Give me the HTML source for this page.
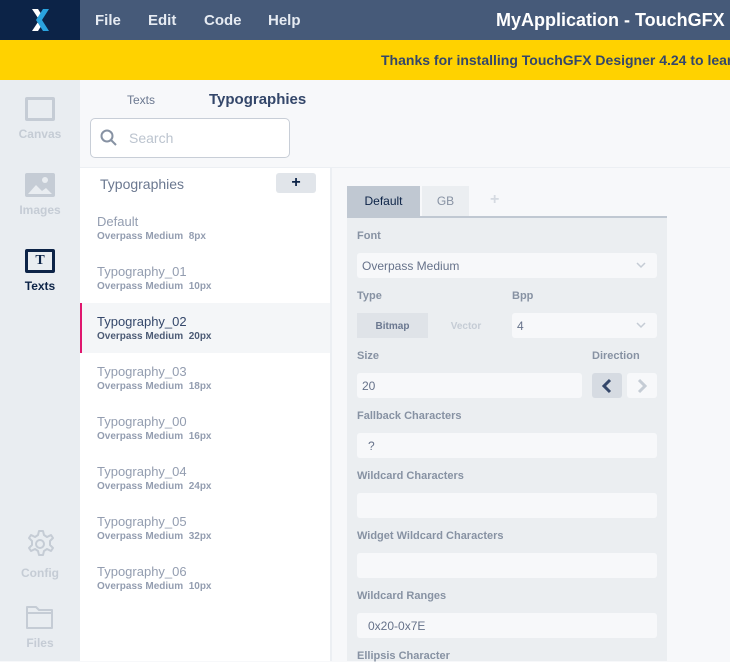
<!DOCTYPE html>
<html><head><meta charset="utf-8"><style>
*{margin:0;padding:0;box-sizing:border-box}
body{width:730px;height:661px;overflow:hidden;background:#f7f8fa;font-family:"Liberation Sans","DejaVu Sans",sans-serif;position:relative}
.a{position:absolute}
.top{left:0;top:0;width:730px;height:40px;background:#465a79}
.logo{left:0;top:0;width:80px;height:40px;background:#0c2347}
.menu{top:12px;color:#e6ebf2;font-size:15px;font-weight:bold}
.yellow{left:0;top:40px;width:730px;height:40px;background:#ffd200}
.side{left:0;top:80px;width:80px;height:581px;background:#e9edf1}
.slab{width:80px;text-align:center;font-size:12px;font-weight:bold;color:#c5ccd5}
.list{left:80px;top:168px;width:250px;height:493px;background:#fff}
.item{left:80px;width:250px;height:50px}
.item .n{position:absolute;left:17px;top:11px;font-size:13px;color:#939db0}
.item .s{position:absolute;left:17px;top:28px;font-size:10px;font-weight:bold;color:#939db0}
.lbl{left:357px;font-size:11px;font-weight:bold;color:#8792a3}
.inp{left:357px;width:300px;height:25px;background:#f7f8fa;border-radius:3px;font-size:12px;color:#66728a;padding:6px 0 0 5px}
</style></head><body>
<div class="a top"></div>
<div class="a logo">
<svg width="80" height="40"><path d="M32 9h6l5 8-3 4z" fill="#fff"/><path d="M32 31h6l5-8-3-4z" fill="#fff"/><path d="M43 9h6l-7 11 7 11h-6l-7-11z" fill="#2aa3df"/></svg>
</div>
<div class="a menu" style="left:95px">File</div>
<div class="a menu" style="left:148px">Edit</div>
<div class="a menu" style="left:204px">Code</div>
<div class="a menu" style="left:268px">Help</div>
<div class="a" style="left:496px;top:10px;color:#fff;font-size:18px;font-weight:bold;white-space:nowrap">MyApplication - TouchGFX D</div>
<div class="a yellow"></div>
<div class="a" style="left:381px;top:52px;color:#34476a;font-size:14px;font-weight:bold;white-space:nowrap">Thanks for installing TouchGFX Designer 4.24 to lear</div>
<div class="a side"></div>
<div class="a" style="left:25px;top:97px;width:30px;height:24px;border:3px solid #c5ccd5;border-radius:2px"></div>
<div class="a slab" style="top:127px">Canvas</div>
<svg class="a" style="left:25px;top:173px" width="30" height="24"><rect x="0" y="0" width="30" height="24" rx="2" fill="#c5ccd5"/><path d="M3 21l8-9 6 6 4-3 6 6z" fill="#e9edf1"/><circle cx="20" cy="7" r="3" fill="#e9edf1"/></svg>
<div class="a slab" style="top:203px">Images</div>
<div class="a" style="left:25px;top:249px;width:30px;height:24px;border:3px solid #0c2347;border-radius:2px;text-align:center;font:bold 14px 'Liberation Serif',serif;color:#0c2347;line-height:18px">T</div>
<div class="a slab" style="top:279px;color:#0c2347">Texts</div>
<svg class="a" style="left:24px;top:528px" width="32" height="32"><path d="M16 3l3 0 1 4 3 2 4-2 2 3-3 3 0 4 3 3-2 3-4-2-3 2-1 4h-4l-1-4-3-2-4 2-2-3 3-3v-4l-3-3 2-3 4 2 3-2 1-4z" fill="none" stroke="#c5ccd5" stroke-width="2" stroke-linejoin="round"/><circle cx="16" cy="16" r="4" fill="none" stroke="#c5ccd5" stroke-width="2"/></svg>
<div class="a slab" style="top:566px">Config</div>
<svg class="a" style="left:25px;top:604px" width="30" height="26"><path d="M2 3h9l3 3h13v18H2z M2 9h25" fill="none" stroke="#c5ccd5" stroke-width="2" stroke-linejoin="round"/></svg>
<div class="a slab" style="top:636px">Files</div>

<div class="a" style="left:127px;top:93px;font-size:12px;color:#6b7890">Texts</div>
<div class="a" style="left:209px;top:91px;font-size:15px;font-weight:bold;color:#34476a">Typographies</div>
<div class="a" style="left:90px;top:118px;width:200px;height:40px;border:1px solid #c8ced7;border-radius:5px;background:#fff"></div>
<svg class="a" style="left:100px;top:129px" width="18" height="18"><circle cx="7" cy="7" r="5.5" fill="none" stroke="#8792a3" stroke-width="2"/><path d="M11 11l5 5" stroke="#8792a3" stroke-width="2"/></svg>
<div class="a" style="left:129px;top:130px;font-size:14px;color:#bcc4cf">Search</div>
<div class="a" style="left:80px;top:167px;width:650px;height:1px;background:#eceff3"></div>
<div class="a list"></div>
<div class="a" style="left:330px;top:168px;width:2px;height:493px;background:#eceff3"></div>
<div class="a" style="left:100px;top:176px;font-size:14px;color:#6b7890">Typographies</div>
<div class="a" style="left:276px;top:173px;width:40px;height:20px;background:#e1e5ea;border-radius:3px;text-align:center;font-size:16px;font-weight:bold;color:#0c2347;line-height:19px">+</div>

<div class="a item" style="top:203px"><div class="n">Default</div><div class="s">Overpass Medium&nbsp; 8px</div></div>
<div class="a item" style="top:253px"><div class="n">Typography_01</div><div class="s">Overpass Medium&nbsp; 10px</div></div>
<div class="a item" style="top:303px;background:#f4f6f8;border-left:2px solid #e0176e"><div class="n" style="left:15px;color:#34476a">Typography_02</div><div class="s" style="left:15px;color:#4c5b75">Overpass Medium&nbsp; 20px</div></div>
<div class="a item" style="top:353px"><div class="n">Typography_03</div><div class="s">Overpass Medium&nbsp; 18px</div></div>
<div class="a item" style="top:403px"><div class="n">Typography_00</div><div class="s">Overpass Medium&nbsp; 16px</div></div>
<div class="a item" style="top:453px"><div class="n">Typography_04</div><div class="s">Overpass Medium&nbsp; 24px</div></div>
<div class="a item" style="top:503px"><div class="n">Typography_05</div><div class="s">Overpass Medium&nbsp; 32px</div></div>
<div class="a item" style="top:553px"><div class="n">Typography_06</div><div class="s">Overpass Medium&nbsp; 10px</div></div>

<div class="a" style="left:347px;top:186px;width:73px;height:30px;background:#c0c8d2;font-size:12px;color:#0c2347;text-align:center;padding-top:8px">Default</div>
<div class="a" style="left:422px;top:186px;width:47px;height:30px;background:#ebeef1;font-size:12px;color:#8792a3;text-align:center;padding-top:8px">GB</div>
<div class="a" style="left:490px;top:191px;font-size:16px;font-weight:bold;color:#d5dae1">+</div>
<div class="a" style="left:347px;top:216px;width:320px;height:2px;background:#c0c8d2"></div>
<div class="a" style="left:347px;top:218px;width:320px;height:443px;background:#ebeef1"></div>

<div class="a lbl" style="top:230px">Font</div>
<div class="a inp" style="top:253px">Overpass Medium</div>
<svg class="a" style="left:636px;top:262px" width="10" height="7"><path d="M1 1l4 4 4-4" fill="none" stroke="#c5ccd5" stroke-width="1.5"/></svg>
<div class="a lbl" style="top:290px">Type</div>
<div class="a lbl" style="left:512px;top:290px">Bpp</div>
<div class="a" style="left:357px;top:313px;width:71px;height:25px;background:#dfe3e8;font-size:10px;font-weight:bold;color:#6b7890;text-align:center;padding-top:8px">Bitmap</div>
<div class="a" style="left:428px;top:313px;width:76px;height:25px;font-size:10px;font-weight:bold;color:#c5ccd5;text-align:center;padding-top:8px">Vector</div>
<div class="a inp" style="left:512px;width:145px;top:313px">4</div>
<svg class="a" style="left:636px;top:322px" width="10" height="7"><path d="M1 1l4 4 4-4" fill="none" stroke="#c5ccd5" stroke-width="1.5"/></svg>
<div class="a lbl" style="top:350px">Size</div>
<div class="a lbl" style="left:592px;top:350px">Direction</div>
<div class="a inp" style="top:373px;width:225px">20</div>
<div class="a" style="left:592px;top:373px;width:30px;height:25px;background:#d6dbe2;border-radius:3px"></div>
<svg class="a" style="left:600px;top:378px" width="14" height="16"><path d="M10 2L4 8l6 6" fill="none" stroke="#34476a" stroke-width="3"/></svg>
<div class="a" style="left:627px;top:373px;width:30px;height:25px;background:#f7f8fa;border-radius:3px"></div>
<svg class="a" style="left:635px;top:378px" width="14" height="16"><path d="M4 2l6 6-6 6" fill="none" stroke="#c5ccd5" stroke-width="3"/></svg>
<div class="a lbl" style="top:410px">Fallback Characters</div>
<div class="a inp" style="top:433px;padding-left:11px">?</div>
<div class="a lbl" style="top:470px">Wildcard Characters</div>
<div class="a inp" style="top:493px"></div>
<div class="a lbl" style="top:530px">Widget Wildcard Characters</div>
<div class="a inp" style="top:553px"></div>
<div class="a lbl" style="top:590px">Wildcard Ranges</div>
<div class="a inp" style="top:613px;padding-left:11px">0x20-0x7E</div>
<div class="a lbl" style="top:650px">Ellipsis Character</div>
</body></html>
